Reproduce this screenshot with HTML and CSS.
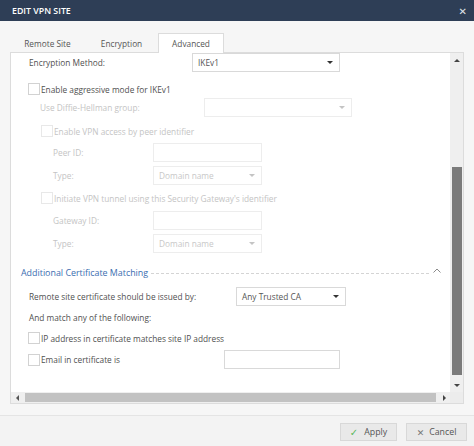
FILE: index.html
```html
<!DOCTYPE html>
<html>
<head>
<meta charset="utf-8">
<link rel="stylesheet" href="styles.css">
</head>
<body>
<div class="dialog">
  <div class="header">
    <span class="title">EDIT VPN SITE</span>
    <span class="close">✕</span>
  </div>
  <div class="tabs">
    <div class="tab t1">Remote Site</div>
    <div class="tab t2">Encryption</div>
    <div class="tab t3 active">Advanced</div>
  </div>
  <div class="panel">
    <div class="content">
      <div class="row field">
        <span class="lbl w164">Encryption Method:</span>
        <div class="select w148"><span>IKEv1</span><i class="caret"></i></div>
      </div>
      <div class="row check mt10">
        <span class="box"></span><span>Enable aggressive mode for IKEv1</span>
      </div>
      <div class="row field ind1 off mt2">
        <span class="lbl w164">Use Diffie-Hellman group:</span>
        <div class="select w148"><span></span><i class="caret"></i></div>
      </div>
      <div class="row check ind1b off mt7">
        <span class="box"></span><span>Enable VPN access by peer identifier</span>
      </div>
      <div class="row field ind2 off mt5">
        <span class="lbl w100">Peer ID:</span>
        <div class="input w109"></div>
      </div>
      <div class="row field ind2 off mt4">
        <span class="lbl w100">Type:</span>
        <div class="select w109"><span>Domain name</span><i class="caret"></i></div>
      </div>
      <div class="row check ind1b off mt6">
        <span class="box"></span><span>Initiate VPN tunnel using this Security Gateway's identifier</span>
      </div>
      <div class="row field ind2 off mt6">
        <span class="lbl w100">Gateway ID:</span>
        <div class="input w109"></div>
      </div>
      <div class="row field ind2 off mt4">
        <span class="lbl w100">Type:</span>
        <div class="select w109"><span>Domain name</span><i class="caret"></i></div>
      </div>
      <div class="section mt12">
        <span class="section-title">Additional Certificate Matching</span>
        <span class="dash"></span>
        <svg class="chev" width="8" height="5" viewBox="0 0 8 5"><polyline points="0.5,4.5 4,1 7.5,4.5" fill="none" stroke="#8a8a8a" stroke-width="1"/></svg>
      </div>
      <div class="row field mt8">
        <span class="lbl w208">Remote site certificate should be issued by:</span>
        <div class="select w110"><span>Any Trusted CA</span><i class="caret"></i></div>
      </div>
      <div class="row text mt4">
        <span class="lbl">And match any of the following:</span>
      </div>
      <div class="row check mt7">
        <span class="box"></span><span>IP address in certificate matches site IP address</span>
      </div>
      <div class="row field mt5">
        <span class="box"></span><span class="w183">Email in certificate is</span>
        <div class="input w116"></div>
      </div>
    </div>
    <div class="vscroll">
      <div class="sb-btn"><i class="tri-up"></i></div>
      <div class="vtrack"><div class="vthumb"></div></div>
      <div class="sb-btn"><i class="tri-down"></i></div>
    </div>
    <div class="hscroll">
      <div class="sb-btn-h"><i class="tri-left"></i></div>
      <div class="hthumb"></div>
      <div class="sb-btn-h"><i class="tri-right"></i></div>
    </div>
    <div class="corner"></div>
  </div>
  <div class="footer">
    <div class="btn apply"><span class="ok">✓</span>Apply</div>
    <div class="btn cancel"><span class="x">✕</span>Cancel</div>
  </div>
</div>
</body>
</html>
```

FILE: styles.css
```css
html, body {
  margin: 0;
  padding: 0;
}
body {
  background: #f6f6f6;
  font-family: "Open Sans", "DejaVu Sans", sans-serif;
  font-size: 8.3px;
  color: #505050;
}
.dialog {
  width: 474px;
  height: 446px;
  display: flex;
  flex-direction: column;
  overflow: hidden;
}
.header {
  height: 21px;
  flex: none;
  background: #2e3e56;
  color: #ffffff;
  display: flex;
  align-items: center;
  justify-content: space-between;
  padding: 0 7px 0 12px;
  font-weight: 600;
  font-size: 8.8px;
}
.close {
  font-size: 10px;
  color: #dfe3ea;
  font-weight: 700;
}
.tabs {
  display: flex;
  height: 20px;
  margin: 12px 0 -1px 10px;
  position: relative;
  z-index: 1;
  flex: none;
}
.tab {
  display: flex;
  align-items: center;
  justify-content: center;
  color: #555;
  box-sizing: border-box;
  height: 20px;
}
.t1 { width: 75px; }
.t2 { width: 73px; }
.t3 { width: 66px; }
.tab.active {
  background: #fff;
  border: 1px solid #dcdcdc;
  border-bottom: none;
}
.panel {
  margin-left: 10px;
  width: 454px;
  height: 352px;
  flex: none;
  box-sizing: border-box;
  border: 1px solid #dcdcdc;
  background: #fff;
  display: grid;
  grid-template-columns: 1fr 13px;
  grid-template-rows: 1fr 11px;
}
.content {
  overflow: hidden;
  padding-left: 17px;
  display: flex;
  flex-direction: column;
}
.row {
  display: flex;
  align-items: center;
  flex: none;
  white-space: nowrap;
}
.field { height: 19px; }
.check, .text { height: 14px; }
.ind1 { padding-left: 12px; }
.ind1b { padding-left: 13px; }
.ind2 { padding-left: 25px; }
.mt2 { margin-top: 2px; }
.mt4 { margin-top: 4px; }
.mt5 { margin-top: 5px; }
.mt6 { margin-top: 6px; }
.mt7 { margin-top: 7px; }
.mt8 { margin-top: 8px; }
.mt10 { margin-top: 10px; }
.mt12 { margin-top: 12px; }
.lbl { padding-left: 1px; box-sizing: border-box; flex: none; }
.ind1 .lbl, .ind2 .lbl { padding-left: 0; }
.w100 { width: 100px; }
.w109 { width: 109px; }
.w110 { width: 110px; }
.w116 { width: 116px; }
.w148 { width: 148px; }
.w164 { width: 164px; }
.w183 { width: 183px; flex: none; }
.w208 { width: 208px; }
.select, .input {
  height: 19px;
  box-sizing: border-box;
  border: 1px solid #d9d9d9;
  background: #fff;
  flex: none;
}
.select {
  display: flex;
  align-items: center;
  justify-content: space-between;
  padding: 0 6px 0 5px;
  color: #555;
}
.caret {
  width: 0;
  height: 0;
  border-left: 3px solid transparent;
  border-right: 3px solid transparent;
  border-top: 3px solid #333;
}
.box {
  width: 12px;
  height: 12px;
  box-sizing: border-box;
  border: 1px solid #d2d2d2;
  background: #fff;
  margin-right: 1px;
  flex: none;
}
.off { color: #c4c4c4; }
.off .select, .off .input { border-color: #ededed; color: #c8c8c8; }
.off .caret { border-top-color: #c4c4c4; }
.off .box { border-color: #e8e8e8; }
.section {
  display: flex;
  align-items: center;
  height: 14px;
  margin-left: -7px;
  padding-right: 9px;
  flex: none;
}
.section-title {
  color: #3a6db0;
  font-size: 8.9px;
  white-space: nowrap;
}
.dash {
  flex: 1;
  border-bottom: 1px dashed #d4d4d4;
  margin: 2px 4px 0 3px;
}
.chev { flex: none; margin-top: -3px; }
.vscroll {
  background: #efefef;
  display: flex;
  flex-direction: column;
}
.sb-btn {
  height: 14px;
  display: flex;
  align-items: center;
  justify-content: center;
  flex: none;
}
.vtrack {
  flex: 1;
  padding: 0 1px 0 2px;
}
.vthumb {
  margin-top: 100px;
  height: 208px;
  background: #7b7b7b;
}
.tri-up, .tri-down, .tri-left, .tri-right {
  width: 0;
  height: 0;
}
.tri-up {
  border-left: 3px solid transparent;
  border-right: 3px solid transparent;
  border-bottom: 3px solid #444;
}
.tri-down {
  border-left: 3px solid transparent;
  border-right: 3px solid transparent;
  border-top: 3px solid #444;
}
.tri-left {
  border-top: 3px solid transparent;
  border-bottom: 3px solid transparent;
  border-right: 3px solid #555;
}
.tri-right {
  border-top: 3px solid transparent;
  border-bottom: 3px solid transparent;
  border-left: 3px solid #444;
}
.hscroll {
  background: #efefef;
  display: flex;
  align-items: stretch;
}
.sb-btn-h {
  width: 12px;
  display: flex;
  align-items: center;
  justify-content: center;
  flex: none;
}
.hthumb {
  flex: 1;
  background: #c2c2c2;
  margin: 1px 2px;
}
.corner { background: #ececec; }
.footer {
  flex: 1;
  margin-top: 11px;
  border-top: 1px solid #e4e4e4;
  background: #f3f3f3;
  display: flex;
  justify-content: flex-end;
  align-items: flex-start;
  gap: 9px;
  padding: 7px 7px 0 0;
}
.btn {
  height: 18px;
  box-sizing: border-box;
  border: 1px solid #d8d8d8;
  background: #e9e9e9;
  color: #555;
  display: flex;
  align-items: center;
  justify-content: center;
  font-size: 8.8px;
}
.apply { width: 57px; }
.cancel { width: 61px; }
.ok { color: #5cb85c; margin-right: 6px; font-size: 10px; }
.x { color: #777; margin-right: 5px; font-size: 9px; }
```
